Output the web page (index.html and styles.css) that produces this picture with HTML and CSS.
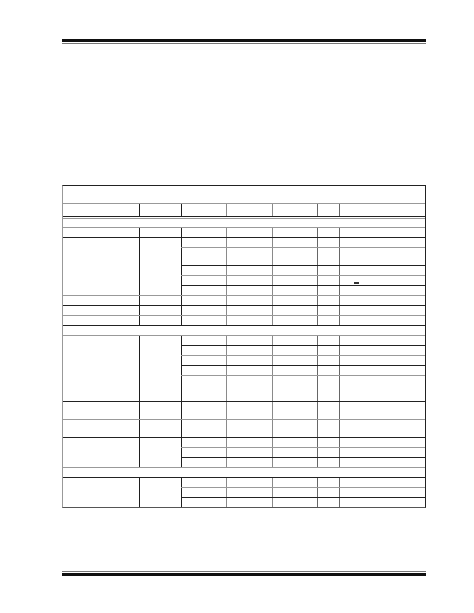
FILE: index.html
```html
<!DOCTYPE html>
<html>
<head>
<meta charset="utf-8">
<link rel="stylesheet" href="styles.css">
</head>
<body>
<div class="page">
  <div class="rule rule-top"></div>
  <div class="tbl">
    <div class="row title"></div>
    <div class="row g h13"><div class="c k1"></div><div class="c k2"></div><div class="c k3"></div><div class="c k4"></div><div class="c k5"></div><div class="c k6"></div><div class="c k7"></div></div>
    <div class="band band-dbl"><div class="band-inner"></div></div>
    <div class="row g h10"><div class="c k1"></div><div class="c k2"></div><div class="c k3"></div><div class="c k4"></div><div class="c k5"></div><div class="c k6"></div><div class="c k7"></div></div>
    <div class="row d grp h58">
      <div class="c k1"></div><div class="c k2"></div>
      <div class="sub">
        <div class="srow s9"><div class="c k3"></div><div class="c k4"></div><div class="c k5"></div><div class="c k6"></div><div class="c k7"></div></div>
        <div class="srow g h18"><div class="c k3"></div><div class="c k4"></div><div class="c k5"></div><div class="c k6"></div><div class="c k7"></div></div>
        <div class="srow d h10"><div class="c k3"></div><div class="c k4"></div><div class="c k5"></div><div class="c k6"></div><div class="c k7"></div></div>
        <div class="srow g h10"><div class="c k3"></div><div class="c k4"></div><div class="c k5"></div><div class="c k6"></div><div class="c k7"><span class="mark"></span></div></div>
        <div class="srow d h10"><div class="c k3"></div><div class="c k4"></div><div class="c k5"></div><div class="c k6"></div><div class="c k7"></div></div>
      </div>
    </div>
    <div class="row g h10"><div class="c k1"></div><div class="c k2"></div><div class="c k3"></div><div class="c k4"></div><div class="c k5"></div><div class="c k6"></div><div class="c k7"></div></div>
    <div class="row d h10"><div class="c k1"></div><div class="c k2"></div><div class="c k3"></div><div class="c k4"></div><div class="c k5"></div><div class="c k6"></div><div class="c k7"></div></div>
    <div class="row g h10"><div class="c k1"></div><div class="c k2"></div><div class="c k3"></div><div class="c k4"></div><div class="c k5"></div><div class="c k6"></div><div class="c k7"></div></div>
    <div class="band d h10"></div>
    <div class="row g grp h66">
      <div class="c k1"></div><div class="c k2"></div>
      <div class="sub">
        <div class="srow s9"><div class="c k3"></div><div class="c k4"></div><div class="c k5"></div><div class="c k6"></div><div class="c k7"></div></div>
        <div class="srow d h10"><div class="c k3"></div><div class="c k4"></div><div class="c k5"></div><div class="c k6"></div><div class="c k7"></div></div>
        <div class="srow g h10"><div class="c k3"></div><div class="c k4"></div><div class="c k5"></div><div class="c k6"></div><div class="c k7"></div></div>
        <div class="srow d h10"><div class="c k3"></div><div class="c k4"></div><div class="c k5"></div><div class="c k6"></div><div class="c k7"></div></div>
        <div class="srow g h26"><div class="c k3"></div><div class="c k4"></div><div class="c k5"></div><div class="c k6"></div><div class="c k7"></div></div>
      </div>
    </div>
    <div class="row d h18"><div class="c k1"></div><div class="c k2"></div><div class="c k3"></div><div class="c k4"></div><div class="c k5"></div><div class="c k6"></div><div class="c k7"></div></div>
    <div class="row g h18"><div class="c k1"></div><div class="c k2"></div><div class="c k3"></div><div class="c k4"></div><div class="c k5"></div><div class="c k6"></div><div class="c k7"></div></div>
    <div class="row d grp h30">
      <div class="c k1"></div><div class="c k2"></div>
      <div class="sub">
        <div class="srow s9"><div class="c k3"></div><div class="c k4"></div><div class="c k5"></div><div class="c k6"></div><div class="c k7"></div></div>
        <div class="srow g h10"><div class="c k3"></div><div class="c k4"></div><div class="c k5"></div><div class="c k6"></div><div class="c k7"></div></div>
        <div class="srow d h10"><div class="c k3"></div><div class="c k4"></div><div class="c k5"></div><div class="c k6"></div><div class="c k7"></div></div>
      </div>
    </div>
    <div class="band g h10"></div>
    <div class="row d grp h30">
      <div class="c k1"></div><div class="c k2"></div>
      <div class="sub">
        <div class="srow s9"><div class="c k3"></div><div class="c k4"></div><div class="c k5"></div><div class="c k6"></div><div class="c k7"></div></div>
        <div class="srow g h10"><div class="c k3"></div><div class="c k4"></div><div class="c k5"></div><div class="c k6"></div><div class="c k7"></div></div>
        <div class="srow d h10"><div class="c k3"></div><div class="c k4"></div><div class="c k5"></div><div class="c k6"></div><div class="c k7"></div></div>
      </div>
    </div>
  </div>
  <div class="rule rule-bottom"></div>
</div>
</body>
</html>
```

FILE: styles.css
```css
* { box-sizing: border-box; }
html, body { margin: 0; padding: 0; background: #fff; }
body { font-family: "Liberation Sans", Arial, sans-serif; }

.page {
  width: 474px;
  height: 613px;
  padding: 39px 0 0 62px;
  overflow: hidden;
}

.rule { width: 364px; height: 5px; }
.rule-top { border-top: 3px solid #111; border-bottom: 1px solid #777; }
.rule-bottom { margin-top: 63px; border-top: 1px solid #777; border-bottom: 3px solid #111; }

.tbl {
  margin-top: 141px;
  width: 364px;
  border-top: 1px solid #222;
  border-left: 1px solid #999;
  border-right: 1px solid #222;
  border-bottom: 1px solid #555;
}

.row { display: flex; border-top: 1px solid #999; }
.row.title { height: 17px; border-top: 0; }
.row.d, .srow.d, .band.d { border-top-color: #222; }
.row.g, .srow.g, .band.g { border-top-color: #999; }

.band { border-top: 1px solid #999; }
.band-dbl { height: 11px; border-top: 1px solid #222; }
.band-inner { margin-top: 1px; height: 9px; border-top: 1px solid #999; }

.h10 { height: 10px; }
.h13 { height: 13px; }
.h18 { height: 18px; }
.h26 { height: 26px; }
.h30 { height: 30px; }
.h58 { height: 58px; }
.h66 { height: 66px; }

.sub { display: flex; flex-direction: column; flex: 0 0 244px; }
.srow { display: flex; border-top: 1px solid #999; }
.srow.s9 { height: 9px; border-top: 0; }

.c { border-left: 1px solid #999; align-self: stretch; }
.k1 { flex: 0 0 76px; border-left: 0; }
.k2 { flex: 0 0 42px; border-left-color: #1e1e1e; }
.k3 { flex: 0 0 45px; border-left-color: #1e1e1e; }
.k4 { flex: 0 0 46px; border-left-color: #8a8a8a; }
.k5 { flex: 0 0 45px; border-left-color: #8a8a8a; }
.k6 { flex: 0 0 22px; border-left-color: #666; }
.k7 { flex: 0 0 86px; border-left-color: #666; }

.mark {
  display: block;
  width: 5px;
  height: 2px;
  margin: 6px 0 0 14px;
  background: #333;
}
```
